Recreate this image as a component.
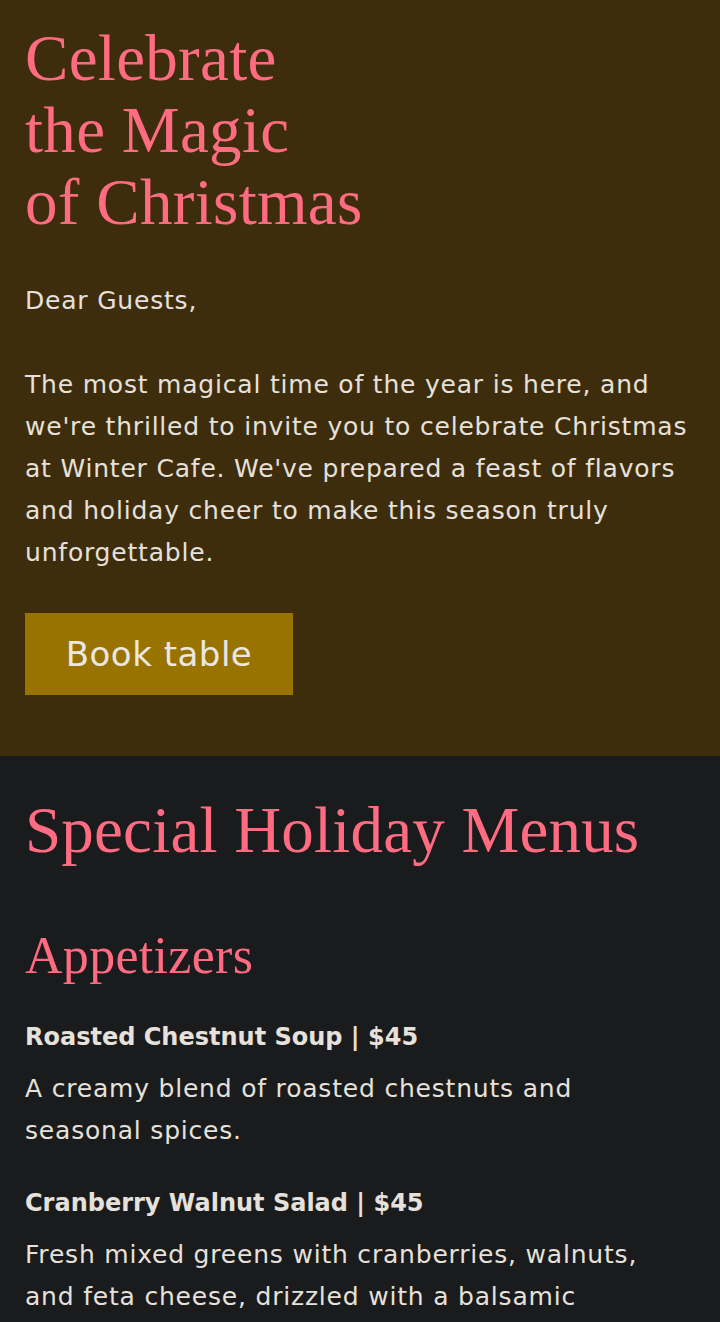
export default function App() {
  const body = { fontFamily: '"DejaVu Sans", "Noto Sans", sans-serif' };
  const head = { fontFamily: '"Liberation Serif", serif' };

  return (
    <div className="min-h-screen bg-[#1a1b1d]">
      {/* Hero */}
      <section className="bg-[#3e2d0d] px-[25px] pt-[22px] pb-[61px]">
        <h1 style={head} className="text-[65px] leading-[72px] tracking-[0.3px] text-[#ff6b81]">
          Celebrate
          <br />
          the Magic
          <br />
          of Christmas
        </h1>
        <p
          style={body}
          className="mt-[42px] text-[25px] leading-[42px] tracking-[0.8px] text-[#e6e1db]"
        >
          Dear Guests,
          <br />
          <br />
          The most magical time of the year is here, and
          <br />
          we're thrilled to invite you to celebrate Christmas
          <br />
          at Winter Cafe. We've prepared a feast of flavors
          <br />
          and holiday cheer to make this season truly
          <br />
          unforgettable.
        </p>
        <button
          style={body}
          className="mt-[39px] h-[82px] w-[268px] bg-[#997300] text-[34px] tracking-[0.5px] text-[#ebe7e2]"
        >
          Book table
        </button>
      </section>

      {/* Menus */}
      <section className="px-[25px] pt-[38px] pb-[40px]">
        <h2 style={head} className="text-[65px] leading-[72px] tracking-[0.2px] text-[#ff6b81]">
          Special Holiday Menus
        </h2>
        <h3 style={head} className="mt-[61px] text-[52px] leading-[58px] tracking-[0.3px] text-[#ff6b81]">
          Appetizers
        </h3>
        <div style={body} className="mt-[32px] text-[#e6e1db]">
          <div>
            <h4 className="text-[24px] font-bold leading-[40px]">Roasted Chestnut Soup | $45</h4>
            <p className="mt-[11px] text-[25px] leading-[42px] tracking-[0.8px]">
              A creamy blend of roasted chestnuts and
              <br />
              seasonal spices.
            </p>
          </div>
          <div className="mt-[31px]">
            <h4 className="text-[24px] font-bold leading-[40px]">Cranberry Walnut Salad | $45</h4>
            <p className="mt-[11px] text-[25px] leading-[42px] tracking-[0.8px]">
              Fresh mixed greens with cranberries, walnuts,
              <br />
              and feta cheese, drizzled with a balsamic
              <br />
              glaze.
            </p>
          </div>
        </div>
      </section>
    </div>
  );
}
